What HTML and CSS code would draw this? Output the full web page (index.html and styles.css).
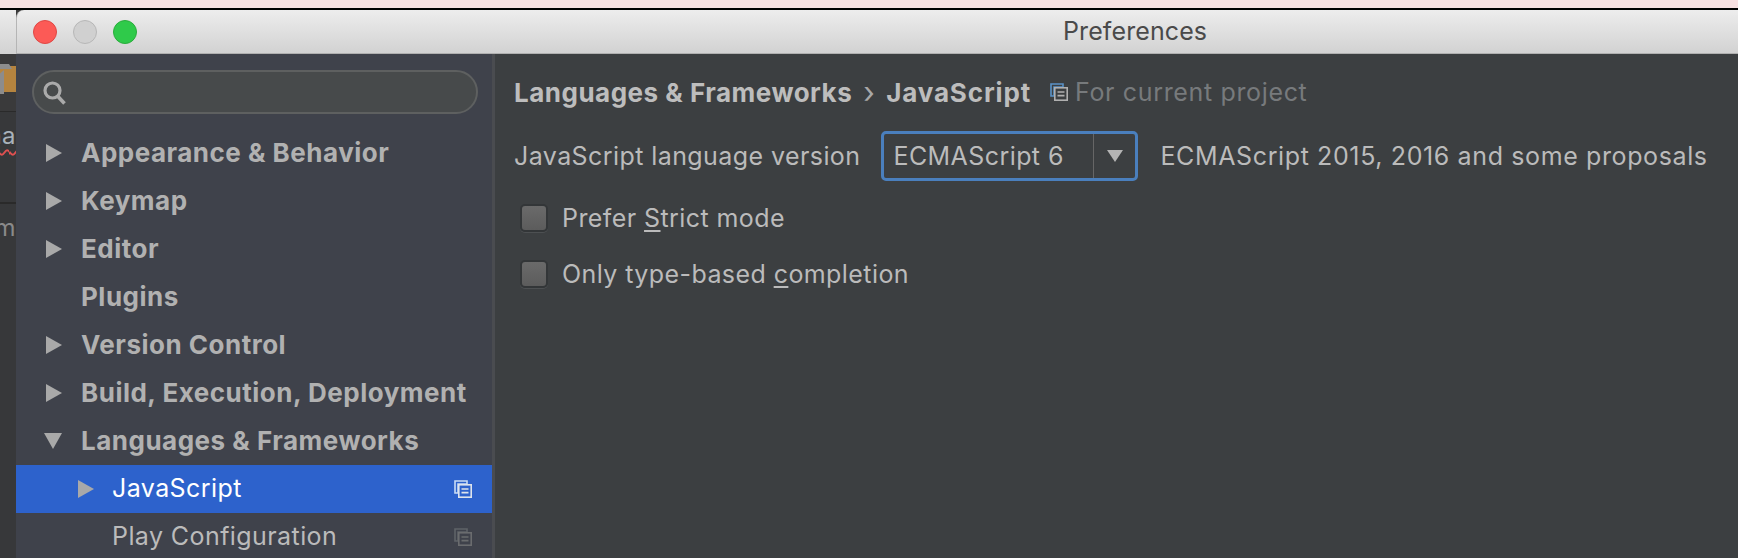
FILE: index.html
```html
<!DOCTYPE html>
<html lang="en">
<head>
<meta charset="utf-8">
<title>Preferences</title>
<link rel="stylesheet" href="styles.css">
</head>
<body>
<svg class="defs" width="0" height="0" aria-hidden="true">
  <symbol id="copy" viewBox="0 0 18 18">
    <path d="M1 1h12v3H4v9H1z M1 1" fill="none" stroke="currentColor" stroke-width="1.6"/>
    <rect x="4.8" y="4.8" width="12.4" height="12.4" fill="none" stroke="var(--front, currentColor)" stroke-width="1.6"/>
    <path d="M7.5 9h7M7.5 12.6h7" stroke="var(--front, currentColor)" stroke-width="1.6"/>
  </symbol>
  <symbol id="tri-r" viewBox="0 0 16 18"><path d="M0 0l16 9L0 18z" fill="currentColor"/></symbol>
  <symbol id="tri-d" viewBox="0 0 18 16"><path d="M0 0h18L9 16z" fill="currentColor"/></symbol>
</svg>
<div class="strip"></div>
<div class="stage">
  <div class="backdrop">
    <div class="bd-title"></div>
    <div class="bd-folder-row">
      <svg class="bd-folder" width="16" height="32" viewBox="0 0 16 32"><path d="M0 4h16v26H0z" fill="#b5843f"/><path d="M0 2h9l3 5H0z" fill="#8d8d8d"/><path d="M-4 15l8-7 0 0 0 24H-4z" fill="#8c8c8c"/></svg>
    </div>
    <div class="bd-tab"><span class="bd-text">na</span></div>
    <div class="bd-tab bd-last"><span class="bd-text bd-dim">m</span></div>
  </div>
  <div class="window">
    <header class="titlebar">
      <div class="lights">
        <span class="light red"></span>
        <span class="light grey"></span>
        <span class="light green"></span>
      </div>
      <div class="title">Preferences</div>
    </header>
    <div class="body">
      <aside class="sidebar">
        <div class="search">
          <svg class="search-icon" width="26" height="27" viewBox="0 0 26 27"><circle cx="10.5" cy="10.5" r="7.5" fill="none" stroke="currentColor" stroke-width="3.2"/><path d="M15.5 16l7 7.5" stroke="currentColor" stroke-width="3.6"/></svg>
        </div>
        <nav class="tree">
          <div class="row top"><svg class="arrow" width="16" height="18"><use href="#tri-r"/></svg><span>Appearance &amp; Behavior</span></div>
          <div class="row top"><svg class="arrow" width="16" height="18"><use href="#tri-r"/></svg><span>Keymap</span></div>
          <div class="row top"><svg class="arrow" width="16" height="18"><use href="#tri-r"/></svg><span>Editor</span></div>
          <div class="row top"><span class="arrow"></span><span>Plugins</span></div>
          <div class="row top"><svg class="arrow" width="16" height="18"><use href="#tri-r"/></svg><span>Version Control</span></div>
          <div class="row top"><svg class="arrow" width="16" height="18"><use href="#tri-r"/></svg><span>Build, Execution, Deployment</span></div>
          <div class="row top"><svg class="arrow arrow-d" width="18" height="16"><use href="#tri-d"/></svg><span>Languages &amp; Frameworks</span></div>
          <div class="row sub selected"><svg class="arrow" width="16" height="18"><use href="#tri-r"/></svg><span class="grow">JavaScript</span><svg class="copy" width="18" height="18"><use href="#copy"/></svg></div>
          <div class="row sub"><span class="arrow"></span><span class="grow">Play Configuration</span><svg class="copy dim" width="18" height="18"><use href="#copy"/></svg></div>
        </nav>
      </aside>
      <main class="content">
        <div class="crumbs">
          <span class="crumb">Languages &amp; Frameworks</span>
          <span class="sep">›</span>
          <span class="crumb crumb-last">JavaScript</span>
          <svg class="copy scope" width="18" height="18"><use href="#copy"/></svg>
          <span class="scope-text">For current project</span>
        </div>
        <div class="version">
          <span>JavaScript language version</span>
          <div class="combo">
            <span class="combo-value">ECMAScript 6</span>
            <span class="combo-btn"><svg width="16" height="12" viewBox="0 0 18 16" preserveAspectRatio="none"><use href="#tri-d"/></svg></span>
          </div>
          <span class="combo-note">ECMAScript 2015, 2016 and some proposals</span>
        </div>
        <label class="check first"><span class="box"></span><span>Prefer <u>S</u>trict mode</span></label>
        <label class="check"><span class="box"></span><span>Only type-based <u>c</u>ompletion</span></label>
      </main>
    </div>
  </div>
</div>
</body>
</html>
```
FILE: styles.css
```css
* { box-sizing: border-box; }
html, body { margin: 0; height: 100%; }
body {
  width: 1738px;
  height: 558px;
  overflow: hidden;
  display: flex;
  flex-direction: column;
  background: #3a3a3a;
  font-family: Inter, "Liberation Sans", sans-serif;
  font-size: 25px;
  letter-spacing: 0.42px;
  color: #bbbbbb;
}
.defs { position: absolute; }
.strip {
  height: 10px;
  flex: none;
  background: #f7e0e1;
  border-bottom: 2px solid #000;
}
.stage { flex: 1; display: flex; min-height: 0; }

.backdrop { width: 16px; flex: none; display: flex; flex-direction: column; overflow: hidden; background: #37383a; }
.bd-title { height: 44px; flex: none; background: linear-gradient(#ececec, #d2d2d2); }
.bd-folder-row { height: 58px; flex: none; padding-top: 8px; border-bottom: 1px solid #2a2a2a; background: #3a3a3b; }
.bd-folder { display: block; }
.bd-tab { height: 92px; flex: none; display: flex; justify-content: flex-end; overflow: hidden; border-bottom: 2px solid #2a2a2a; }
.bd-last { border: 0; flex: 1; }
.bd-text { flex: none; font-size: 24px; line-height: 48px; color: #a9b2bb; height: 46px; text-decoration: underline wavy #e05050 1.5px; text-underline-offset: 5px; }
.bd-dim { color: #8a8a8a; text-decoration: none; }

.window { flex: 1; display: flex; flex-direction: column; min-width: 0; }
.titlebar {
  height: 44px;
  flex: none;
  position: relative;
  display: flex;
  align-items: center;
  padding-left: 16px;
  border-top-left-radius: 8px;
  border-left: 1px solid #b5b5b5;
  border-bottom: 1px solid #b0b0b0;
  background: linear-gradient(#ededed, #d2d2d2);
}
.lights { display: flex; gap: 16px; }
.light { width: 24px; height: 24px; border-radius: 50%; border: 1px solid; }
.red { background: #fc5a56; border-color: #df4744; }
.grey { background: #d0d0d0; border-color: #b7b7b7; }
.green { background: #2fca4a; border-color: #2aac3c; }
.title {
  position: absolute;
  left: 1046px;
  top: 0;
  line-height: 43px;
  letter-spacing: 0.1px;
  color: #4a4a4a;
}

.body { flex: 1; display: flex; min-height: 0; }
.sidebar {
  width: 479px;
  flex: none;
  padding: 16px 0 0;
  background: #3f424b;
  border-right: 3px solid #4a4c50;
  overflow: hidden;
}
.search {
  margin: 0 14px 0 16px;
  height: 44px;
  display: flex;
  align-items: center;
  padding-left: 8px;
  border-radius: 22px;
  border: 2px solid #5e6060;
  background: #474a4b;
  color: #aaaaaa;
}
.search-icon { display: block; margin-top: 2px; }
.tree { margin-top: 15px; }
.row {
  height: 48px;
  display: flex;
  align-items: center;
  padding-left: 30px;
  width: 476px;
  white-space: nowrap;
}
.row > span { margin-bottom: 2px; }
.row .arrow { width: 16px; flex: none; margin-right: 19px; color: #a9a9a9; }
.row .arrow-d { width: 18px; margin-left: -2px; }
.top { font-size: 26px; font-weight: 700; letter-spacing: 0.5px; color: #b1b1b1; }
.sub { padding-left: 62px; padding-right: 20px; }
.sub .arrow { margin-right: 18px; }
.selected { background: #2d62cc; color: #ffffff; }
.grow { flex: 1; }
.copy { flex: none; color: #c8dcf5; --front: #dde3ec; }
.copy.dim { color: #5f6368; --front: #6a6c6e; }

.content {
  flex: 1;
  min-width: 0;
  padding: 15px 0 0 19px;
  background: #3c3f41;
  white-space: nowrap;
}
.crumbs { height: 46px; display: flex; align-items: center; }
.crumb { font-size: 26px; font-weight: 700; letter-spacing: 0.5px; color: #bdbdbd; }
.crumb-last { letter-spacing: 0.85px; }
.sep { margin: 0 11px; font-size: 30px; line-height: 30px; color: #a8a8a8; }
.copy.scope { color: #5a93c7; --front: #b0b0b0; margin-left: 19px; margin-right: 7px; }
.scope-text { letter-spacing: 0.65px; color: #777a7c; }
.version { height: 50px; margin-top: 16px; display: flex; align-items: center; }
.combo {
  width: 257px;
  height: 50px;
  margin: 0 22px 0 21px;
  display: flex;
  border: 3px solid #4a7fbd;
  border-radius: 5px;
  background: #3c3f41;
}
.combo-value { flex: 1; padding-left: 9px; line-height: 44px; }
.combo-btn { width: 42px; border-left: 1px solid #666; display: flex; align-items: center; justify-content: center; color: #b4b4b4; }
.combo-btn svg { display: block; }
.combo-note { letter-spacing: 0.62px; }
.check { display: flex; align-items: center; height: 56px; padding-left: 6px; }
.check.first { margin-top: 9px; }
.box {
  width: 28px;
  height: 28px;
  margin-right: 14px;
  flex: none;
  border-radius: 5px;
  background: linear-gradient(#6a6a6a, #5c5c5c);
  border: 2px solid #333638;
  box-shadow: 0 1px 0 #4d5052;
}
u { text-underline-offset: 3px; }
```
